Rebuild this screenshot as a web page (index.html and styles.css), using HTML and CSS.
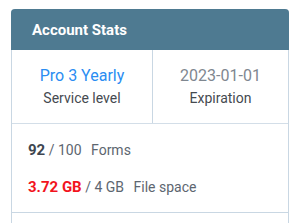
FILE: index.html
```html
<!DOCTYPE html>
<html>
<head>
<meta charset="utf-8">
<link rel="stylesheet" href="styles.css">
</head>
<body>
<div class="card">
  <div class="card-header">Account Stats</div>
  <div class="stats">
    <div class="stat">
      <div class="stat-value plan">Pro 3 Yearly</div>
      <div class="stat-label">Service level</div>
    </div>
    <div class="stat">
      <div class="stat-value date">2023-01-01</div>
      <div class="stat-label">Expiration</div>
    </div>
  </div>
  <div class="usage">
    <div class="usage-row"><span class="used">92</span> <span class="total">/ 100</span> <span class="unit">Forms</span></div>
    <div class="usage-row"><span class="used over">3.72 GB</span> <span class="total">/ 4 GB</span> <span class="unit">File space</span></div>
  </div>
  <div class="more"></div>
</div>
</body>
</html>
```
FILE: styles.css
```css
html, body {
  margin: 0;
  padding: 0;
  background: #ffffff;
  font-family: Roboto, "Liberation Sans", sans-serif;
}
.card {
  margin: 9px 0 0 11px;
  width: 278px;
  border: 1px solid #c9d7e3;
  border-top: none;
  border-radius: 4px 4px 0 0;
  box-sizing: border-box;
}
.card-header {
  margin: 0 -1px;
  height: 41px;
  background: #4e7a91;
  border-radius: 4px 4px 0 0;
  color: #ffffff;
  font-weight: 700;
  font-size: 15px;
  line-height: 42px;
  padding-left: 21px;
}
.stats {
  display: grid;
  grid-template-columns: 140px 1fr;
  border-bottom: 1px solid #d3dee8;
}
.stat {
  height: 73px;
  box-sizing: border-box;
  padding-top: 15px;
  text-align: center;
}
.stat + .stat {
  border-left: 1px solid #c9d7e3;
}
.stat-value {
  font-size: 16px;
  line-height: 22px;
  margin-bottom: 1px;
}
.plan { color: #2a8df2; }
.date { color: #7f8790; }
.stat-label {
  font-size: 14px;
  line-height: 20px;
  color: #454a50;
}
.usage {
  height: 89px;
  box-sizing: border-box;
  padding: 16px 0 0 16px;
  border-bottom: 1px solid #c9d7e3;
}
.usage-row {
  font-size: 14px;
  line-height: 20px;
  margin-bottom: 17px;
  color: #5d6670;
}
.used {
  font-size: 15px;
  font-weight: 700;
  color: #3e4650;
}
.used.over {
  color: #f2141e;
}
.total {
  color: #5d6670;
  margin-right: 6px;
}
.more {
  height: 20px;
}
```
